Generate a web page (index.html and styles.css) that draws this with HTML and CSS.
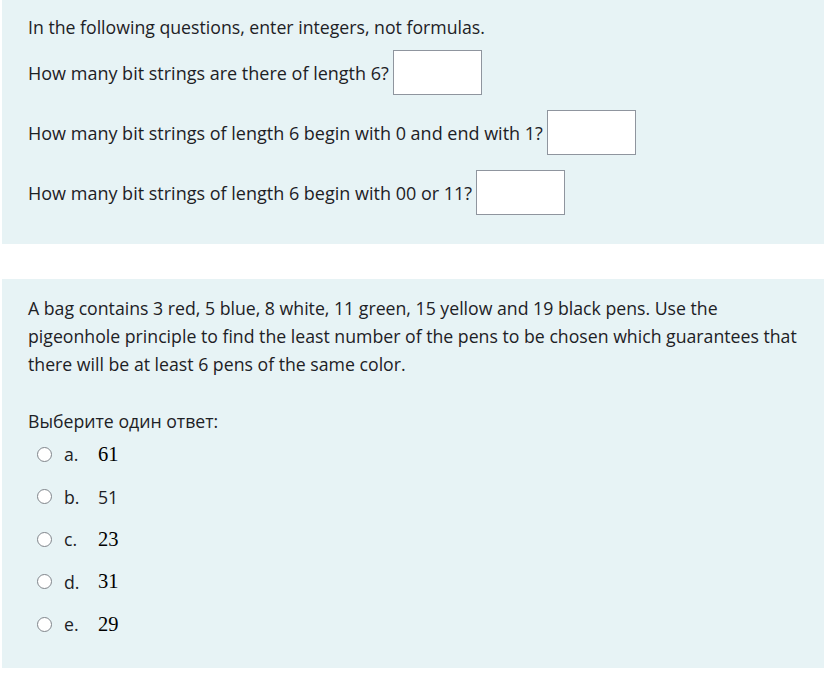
FILE: index.html
```html
<!DOCTYPE html>
<html>
<head>
<meta charset="utf-8">
<link rel="stylesheet" href="styles.css">
</head>
<body>
<div class="panel panel-one">
  <p class="intro">In the following questions, enter integers, not formulas.</p>
  <div class="q-row">How many bit strings are there of length 6?<span class="answer-box"></span></div>
  <div class="q-row">How many bit strings of length 6 begin with 0 and end with 1?<span class="answer-box"></span></div>
  <div class="q-row">How many bit strings of length 6 begin with 00 or 11?<span class="answer-box"></span></div>
</div>
<div class="panel panel-two">
  <p class="question">A bag contains 3 red, 5 blue, 8 white, 11 green, 15 yellow and 19 black pens. Use the pigeonhole principle to find the least number of the pens to be chosen which guarantees that there will be at least 6 pens of the same color.</p>
  <div class="prompt">Выберите один ответ:</div>
  <div class="options">
    <div class="option"><span class="radio"></span><span class="letter">a.</span><span class="num math">61</span></div>
    <div class="option"><span class="radio"></span><span class="letter">b.</span><span class="num">51</span></div>
    <div class="option"><span class="radio"></span><span class="letter">c.</span><span class="num math">23</span></div>
    <div class="option"><span class="radio"></span><span class="letter">d.</span><span class="num math">31</span></div>
    <div class="option"><span class="radio"></span><span class="letter">e.</span><span class="num math">29</span></div>
  </div>
</div>
</body>
</html>
```
FILE: styles.css
```css
html, body {
  margin: 0;
  padding: 0;
  background: #ffffff;
}
body {
  font-family: "Open Sans", "Noto Sans", sans-serif;
  font-size: 17.7px;
  color: #1d2125;
}
.panel {
  background: #e7f3f5;
  margin-left: 2px;
  padding-left: 26px;
  padding-right: 20px;
}
.panel-one {
  height: 244px;
  box-sizing: border-box;
  padding-top: 15px;
}
.intro {
  margin: 0 0 11px 0;
  line-height: 24px;
}
.q-row {
  height: 45px;
  margin-bottom: 15px;
  display: flex;
  align-items: center;
  line-height: 24px;
  font-size: 18px;
}
.answer-box {
  display: inline-block;
  width: 87px;
  height: 43px;
  margin-left: 4px;
  background: #ffffff;
  border: 1px solid #8f959e;
}
.panel-two {
  margin-top: 35px;
  height: 389px;
  box-sizing: border-box;
  padding-top: 15px;
}
.question {
  margin: 0;
  line-height: 28px;
}
.prompt {
  margin-top: 31px;
  line-height: 24px;
}
.options {
  padding-left: 9px;
}
.option {
  display: flex;
  align-items: center;
  height: 42.5px;
}
.radio {
  width: 13px;
  height: 13px;
  border: 1px solid #80858b;
  border-radius: 50%;
  background: #ffffff;
  margin-right: 12px;
}
.letter {
  width: 34px;
}
.num.math {
  font-family: "Liberation Serif", "DejaVu Serif", serif;
  font-size: 20.5px;
  color: #000000;
}
```
